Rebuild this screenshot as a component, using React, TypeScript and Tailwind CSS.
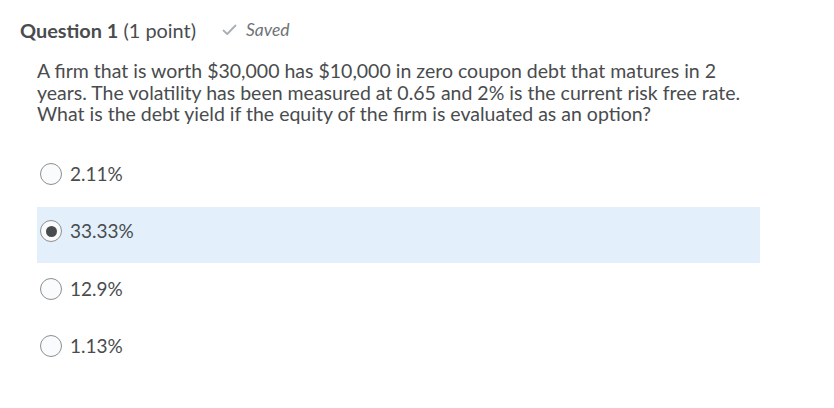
import React from "react";

const options = [
  { label: "2.11%", checked: false },
  { label: "33.33%", checked: true },
  { label: "12.9%", checked: false },
  { label: "1.13%", checked: false },
];

function Radio({ checked }: { checked: boolean }) {
  return (
    <span className="flex h-[22px] w-[22px] shrink-0 items-center justify-center rounded-full border border-[#8c8f91] bg-[#f9fbfd]">
      {checked && <span className="h-[11px] w-[11px] rounded-full bg-[#494c4e]" />}
    </span>
  );
}

export default function App() {
  return (
    <div className="h-[408px] w-[834px] bg-white text-[#494c4e]" style={{ fontFamily: "Lato, 'Open Sans', sans-serif" }}>
      <div className="flex items-center pl-[20px] pt-[17px]">
        <span className="text-[19.9px] leading-[24px]">
          <span className="font-bold">Question 1</span> (1 point)
        </span>
        <span className="ml-[26px] flex items-center gap-[9px] text-[17.5px] italic text-[#6e7376]">
          <svg width="15" height="12" viewBox="0 0 15 12" fill="none">
            <path d="M1.5 6.5 L5.2 10 L13.5 1.5" stroke="#a7b0b6" strokeWidth="1.8" strokeLinecap="round" strokeLinejoin="round" />
          </svg>
          Saved
        </span>
      </div>
      <p className="mt-[17px] w-[745px] pl-[37px] text-[19.5px] leading-[21.5px]">
        A firm that is worth $30,000 has $10,000 in zero coupon debt that matures in 2 years. The volatility has been measured at 0.65 and 2% is the current risk free rate. What is the debt yield if the equity of the firm is evaluated as an option?
      </p>
      <div className="ml-[37px] mt-[25px] flex w-[723px] flex-col gap-[1.5px]">
        {options.map((o) => (
          <div
            key={o.label}
            className={`flex h-[56px] items-start gap-[8px] pl-[3px] pt-[13px] ${o.checked ? "bg-[#e3f0fc]" : ""}`}
          >
            <Radio checked={o.checked} />
            <span className="text-[19px] leading-[22px]">{o.label}</span>
          </div>
        ))}
      </div>
    </div>
  );
}
